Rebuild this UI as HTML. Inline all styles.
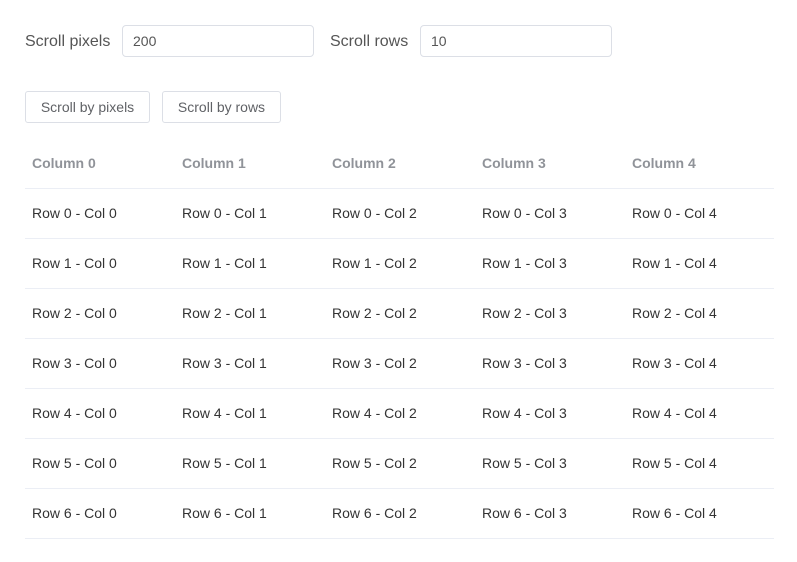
<!DOCTYPE html>
<html><head><style>
body{margin:0;background:#fff;font-family:"Liberation Sans",sans-serif;width:797px;height:562px;overflow:hidden;position:relative}
.abs{position:absolute}
.lbl{font-size:16px;color:#555}
.inp{border:1px solid #dcdfe6;border-radius:4px;height:30px;box-sizing:border-box;font-size:14px;color:#555;padding-left:10px;line-height:30px}
.btn{border:1px solid #dcdfe6;border-radius:3px;height:32px;box-sizing:border-box;font-size:14px;color:#606266;line-height:30px;text-align:center}
.row{position:absolute;left:25px;width:749px;height:50px;border-bottom:1px solid #ebeef5;box-sizing:border-box}
.row span{position:absolute;top:16px;font-size:14px;color:#333}
.hd span{color:#909399;font-weight:bold}
</style></head><body>
<div class="abs lbl" style="left:25px;top:33px">Scroll pixels</div>
<div class="abs inp" style="left:122px;top:25px;width:192px;height:32px">200</div>
<div class="abs lbl" style="left:330px;top:33px">Scroll rows</div>
<div class="abs inp" style="left:420px;top:25px;width:192px;height:32px">10</div>
<div class="abs btn" style="left:25px;top:91px;width:125px">Scroll by pixels</div>
<div class="abs btn" style="left:162px;top:91px;width:119px">Scroll by rows</div>
<div class="row hd" style="top:139px"><span style="left:7px">Column 0</span><span style="left:157px">Column 1</span><span style="left:307px">Column 2</span><span style="left:457px">Column 3</span><span style="left:607px">Column 4</span></div>
<div class="row" style="top:189px"><span style="left:7px">Row 0 - Col 0</span><span style="left:157px">Row 0 - Col 1</span><span style="left:307px">Row 0 - Col 2</span><span style="left:457px">Row 0 - Col 3</span><span style="left:607px">Row 0 - Col 4</span></div>
<div class="row" style="top:239px"><span style="left:7px">Row 1 - Col 0</span><span style="left:157px">Row 1 - Col 1</span><span style="left:307px">Row 1 - Col 2</span><span style="left:457px">Row 1 - Col 3</span><span style="left:607px">Row 1 - Col 4</span></div>
<div class="row" style="top:289px"><span style="left:7px">Row 2 - Col 0</span><span style="left:157px">Row 2 - Col 1</span><span style="left:307px">Row 2 - Col 2</span><span style="left:457px">Row 2 - Col 3</span><span style="left:607px">Row 2 - Col 4</span></div>
<div class="row" style="top:339px"><span style="left:7px">Row 3 - Col 0</span><span style="left:157px">Row 3 - Col 1</span><span style="left:307px">Row 3 - Col 2</span><span style="left:457px">Row 3 - Col 3</span><span style="left:607px">Row 3 - Col 4</span></div>
<div class="row" style="top:389px"><span style="left:7px">Row 4 - Col 0</span><span style="left:157px">Row 4 - Col 1</span><span style="left:307px">Row 4 - Col 2</span><span style="left:457px">Row 4 - Col 3</span><span style="left:607px">Row 4 - Col 4</span></div>
<div class="row" style="top:439px"><span style="left:7px">Row 5 - Col 0</span><span style="left:157px">Row 5 - Col 1</span><span style="left:307px">Row 5 - Col 2</span><span style="left:457px">Row 5 - Col 3</span><span style="left:607px">Row 5 - Col 4</span></div>
<div class="row" style="top:489px"><span style="left:7px">Row 6 - Col 0</span><span style="left:157px">Row 6 - Col 1</span><span style="left:307px">Row 6 - Col 2</span><span style="left:457px">Row 6 - Col 3</span><span style="left:607px">Row 6 - Col 4</span></div>
</body></html>
